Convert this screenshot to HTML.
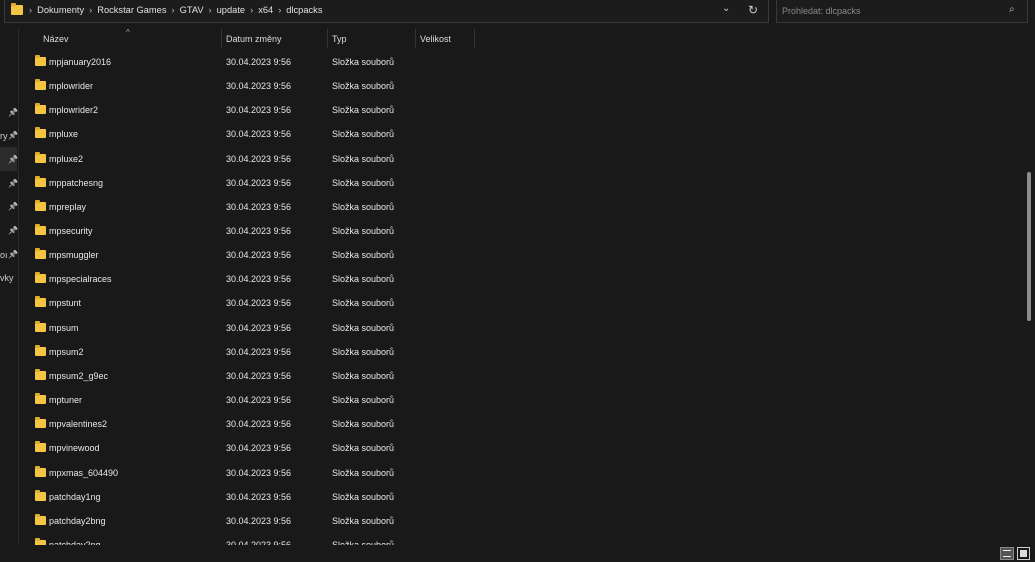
<!DOCTYPE html>
<html><head><meta charset="utf-8"><style>
*{margin:0;padding:0;box-sizing:border-box}
body{width:1035px;height:562px;background:#191919;font-family:"Liberation Sans",sans-serif;font-size:9px;color:#e8e8e8;position:relative;overflow:hidden}
.a{position:absolute}
.addr{left:4px;top:-2px;width:765px;height:25px;border:1px solid #3a3a3a;background:#1c1c1c}
.srch{left:776px;top:-2px;width:252px;height:25px;border:1px solid #3a3a3a;background:#1c1c1c}
.fold{display:inline-block;width:11px;height:9px;background:#f3c543;border-radius:1px;position:relative}
.fold:before{content:"";position:absolute;left:0;top:-2px;width:5px;height:3px;background:#e0ae2c;border-radius:1px 1px 0 0}
.row{position:absolute;left:0;height:14px;width:500px}
.row .fold{position:absolute;left:35px;top:2px}
.row .n{position:absolute;left:49px;top:2px}
.row .d{position:absolute;left:226px;top:2px}
.row .t{position:absolute;left:332px;top:2px}
.sep{position:absolute;top:29px;width:1px;height:19px;background:#333}
.pin{position:absolute;left:8px;color:#aaa;font-size:8px;filter:grayscale(1) brightness(1.4)}
.bc span{margin:0 5px;color:#bbb}
</style></head><body>
<div class="a addr"></div>
<div class="a" style="left:11px;top:5px"><span class="fold" style="width:12px;height:10px"></span></div>
<div class="a bc" style="left:24px;top:5px;color:#e0e0e0;font-size:9.3px"><span>›</span>Dokumenty<span>›</span>Rockstar Games<span>›</span>GTAV<span>›</span>update<span>›</span>x64<span>›</span>dlcpacks</div>
<div class="a" style="left:722px;top:3px;color:#ccc;font-size:10px">⌄</div>
<div class="a" style="left:748px;top:3px;color:#ccc;font-size:12px">↻</div>
<div class="a srch"></div>
<div class="a" style="left:782px;top:6px;color:#8a8a8a">Prohledat: dlcpacks</div>
<div class="a" style="left:1009px;top:4px;color:#bbb;font-size:10px">⌕</div>
<div class="a" style="left:18px;top:28px;width:1px;height:517px;background:#2a2a2a"></div>
<div class="a" style="left:0;top:147px;width:17px;height:24px;background:#2b2b2b"></div>
<div class="a" style="left:126px;top:28px;color:#aaa;font-size:8px">^</div>
<div class="a" style="left:43px;top:34px;color:#ddd">Název</div>
<div class="a" style="left:226px;top:34px;color:#ddd">Datum změny</div>
<div class="a" style="left:332px;top:34px;color:#ddd">Typ</div>
<div class="a" style="left:420px;top:34px;color:#ddd">Velikost</div>
<div class="sep" style="left:221px"></div><div class="sep" style="left:327px"></div><div class="sep" style="left:415px"></div><div class="sep" style="left:474px"></div>
<div class="pin" style="top:108px">📌</div>
<div class="a" style="left:0;top:131px;color:#ccc">ry</div>
<div class="a" style="left:0;top:250px;color:#ccc">oı</div>
<div class="a" style="left:0;top:273px;color:#ccc">vky</div>
<div class="a" style="left:1027px;top:172px;width:4px;height:149px;background:#8c8c8c;border-radius:2px"></div>
<div class="a" style="left:0;top:545px;width:1035px;height:17px;background:#191919"></div>
<div class="a" style="left:1000px;top:547px;width:14px;height:13px;background:#555;border:1px solid #888"></div>
<div class="a" style="left:1003px;top:550px;width:8px;height:7px;border-top:1px solid #eee;border-bottom:1px solid #eee"></div>
<div class="a" style="left:1017px;top:547px;width:13px;height:13px;border:1px solid #ccc"></div>
<div class="a" style="left:1020px;top:550px;width:7px;height:7px;background:#ddd"></div>
<div class="row" style="top:55px"><span class="fold"></span><span class="n">mpjanuary2016</span><span class="d">30.04.2023 9:56</span><span class="t">Složka souborů</span></div>
<div class="row" style="top:79px"><span class="fold"></span><span class="n">mplowrider</span><span class="d">30.04.2023 9:56</span><span class="t">Složka souborů</span></div>
<div class="row" style="top:103px"><span class="fold"></span><span class="n">mplowrider2</span><span class="d">30.04.2023 9:56</span><span class="t">Složka souborů</span></div>
<div class="row" style="top:127px"><span class="fold"></span><span class="n">mpluxe</span><span class="d">30.04.2023 9:56</span><span class="t">Složka souborů</span></div>
<div class="row" style="top:152px"><span class="fold"></span><span class="n">mpluxe2</span><span class="d">30.04.2023 9:56</span><span class="t">Složka souborů</span></div>
<div class="row" style="top:176px"><span class="fold"></span><span class="n">mppatchesng</span><span class="d">30.04.2023 9:56</span><span class="t">Složka souborů</span></div>
<div class="row" style="top:200px"><span class="fold"></span><span class="n">mpreplay</span><span class="d">30.04.2023 9:56</span><span class="t">Složka souborů</span></div>
<div class="row" style="top:224px"><span class="fold"></span><span class="n">mpsecurity</span><span class="d">30.04.2023 9:56</span><span class="t">Složka souborů</span></div>
<div class="row" style="top:248px"><span class="fold"></span><span class="n">mpsmuggler</span><span class="d">30.04.2023 9:56</span><span class="t">Složka souborů</span></div>
<div class="row" style="top:272px"><span class="fold"></span><span class="n">mpspecialraces</span><span class="d">30.04.2023 9:56</span><span class="t">Složka souborů</span></div>
<div class="row" style="top:296px"><span class="fold"></span><span class="n">mpstunt</span><span class="d">30.04.2023 9:56</span><span class="t">Složka souborů</span></div>
<div class="row" style="top:321px"><span class="fold"></span><span class="n">mpsum</span><span class="d">30.04.2023 9:56</span><span class="t">Složka souborů</span></div>
<div class="row" style="top:345px"><span class="fold"></span><span class="n">mpsum2</span><span class="d">30.04.2023 9:56</span><span class="t">Složka souborů</span></div>
<div class="row" style="top:369px"><span class="fold"></span><span class="n">mpsum2_g9ec</span><span class="d">30.04.2023 9:56</span><span class="t">Složka souborů</span></div>
<div class="row" style="top:393px"><span class="fold"></span><span class="n">mptuner</span><span class="d">30.04.2023 9:56</span><span class="t">Složka souborů</span></div>
<div class="row" style="top:417px"><span class="fold"></span><span class="n">mpvalentines2</span><span class="d">30.04.2023 9:56</span><span class="t">Složka souborů</span></div>
<div class="row" style="top:441px"><span class="fold"></span><span class="n">mpvinewood</span><span class="d">30.04.2023 9:56</span><span class="t">Složka souborů</span></div>
<div class="row" style="top:466px"><span class="fold"></span><span class="n">mpxmas_604490</span><span class="d">30.04.2023 9:56</span><span class="t">Složka souborů</span></div>
<div class="row" style="top:490px"><span class="fold"></span><span class="n">patchday1ng</span><span class="d">30.04.2023 9:56</span><span class="t">Složka souborů</span></div>
<div class="row" style="top:514px"><span class="fold"></span><span class="n">patchday2bng</span><span class="d">30.04.2023 9:56</span><span class="t">Složka souborů</span></div>
<div class="a" style="left:0;top:538px;width:1000px;height:7px;overflow:hidden"><div class="row" style="top:0"><span class="fold"></span><span class="n">patchday2ng</span><span class="d">30.04.2023 9:56</span><span class="t">Složka souborů</span></div></div>
<div class="pin" style="top:131px">📌</div><div class="pin" style="top:155px">📌</div><div class="pin" style="top:179px">📌</div><div class="pin" style="top:202px">📌</div><div class="pin" style="top:226px">📌</div><div class="pin" style="top:250px">📌</div>
</body></html>
